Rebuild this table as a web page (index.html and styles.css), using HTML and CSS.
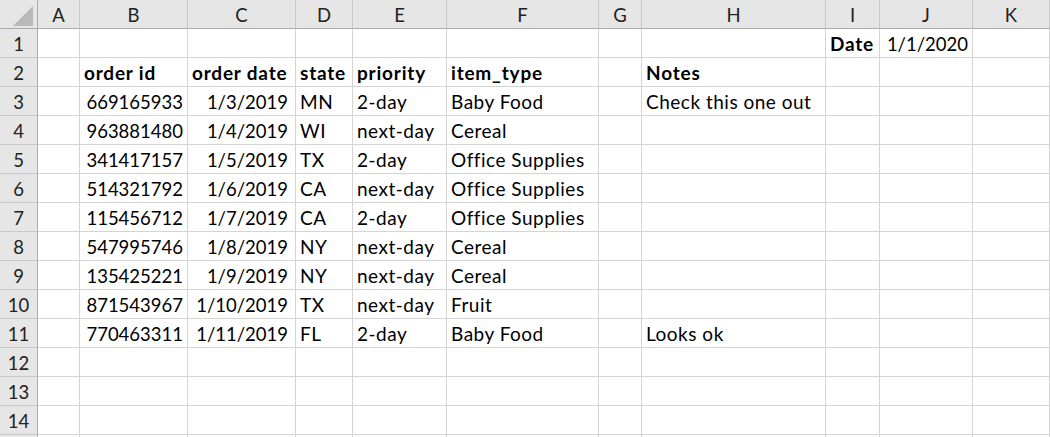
FILE: index.html
```html
<!DOCTYPE html>
<html>
<head>
<meta charset="utf-8">
<link rel="stylesheet" href="styles.css">
</head>
<body>
<div class="sheet">
  <div class="corner"><span class="tri"></span></div>
  <div class="ch">A</div><div class="ch">B</div><div class="ch">C</div><div class="ch">D</div><div class="ch">E</div><div class="ch">F</div><div class="ch">G</div><div class="ch">H</div><div class="ch">I</div><div class="ch">J</div><div class="ch">K</div>

  <div class="rh">1</div><div class="c"></div><div class="c"></div><div class="c"></div><div class="c"></div><div class="c"></div><div class="c"></div><div class="c"></div><div class="c"></div><div class="c b">Date</div><div class="c n rj">1/1/2020</div><div class="c"></div>

  <div class="rh">2</div><div class="c"></div><div class="c b">order id</div><div class="c b">order date</div><div class="c b">state</div><div class="c b">priority</div><div class="c b">item_type</div><div class="c"></div><div class="c b">Notes</div><div class="c"></div><div class="c"></div><div class="c"></div>

  <div class="rh">3</div><div class="c"></div><div class="c n rb">669165933</div><div class="c n rc">1/3/2019</div><div class="c">MN</div><div class="c">2-day</div><div class="c">Baby Food</div><div class="c"></div><div class="c ov">Check this one out</div><div class="c"></div><div class="c"></div><div class="c"></div>

  <div class="rh">4</div><div class="c"></div><div class="c n rb">963881480</div><div class="c n rc">1/4/2019</div><div class="c">WI</div><div class="c">next-day</div><div class="c">Cereal</div><div class="c"></div><div class="c"></div><div class="c"></div><div class="c"></div><div class="c"></div>

  <div class="rh">5</div><div class="c"></div><div class="c n rb">341417157</div><div class="c n rc">1/5/2019</div><div class="c">TX</div><div class="c">2-day</div><div class="c">Office Supplies</div><div class="c"></div><div class="c"></div><div class="c"></div><div class="c"></div><div class="c"></div>

  <div class="rh">6</div><div class="c"></div><div class="c n rb">514321792</div><div class="c n rc">1/6/2019</div><div class="c">CA</div><div class="c">next-day</div><div class="c">Office Supplies</div><div class="c"></div><div class="c"></div><div class="c"></div><div class="c"></div><div class="c"></div>

  <div class="rh">7</div><div class="c"></div><div class="c n rb">115456712</div><div class="c n rc">1/7/2019</div><div class="c">CA</div><div class="c">2-day</div><div class="c">Office Supplies</div><div class="c"></div><div class="c"></div><div class="c"></div><div class="c"></div><div class="c"></div>

  <div class="rh">8</div><div class="c"></div><div class="c n rb">547995746</div><div class="c n rc">1/8/2019</div><div class="c">NY</div><div class="c">next-day</div><div class="c">Cereal</div><div class="c"></div><div class="c"></div><div class="c"></div><div class="c"></div><div class="c"></div>

  <div class="rh">9</div><div class="c"></div><div class="c n rb">135425221</div><div class="c n rc">1/9/2019</div><div class="c">NY</div><div class="c">next-day</div><div class="c">Cereal</div><div class="c"></div><div class="c"></div><div class="c"></div><div class="c"></div><div class="c"></div>

  <div class="rh">10</div><div class="c"></div><div class="c n rb">871543967</div><div class="c n rc">1/10/2019</div><div class="c">TX</div><div class="c">next-day</div><div class="c">Fruit</div><div class="c"></div><div class="c"></div><div class="c"></div><div class="c"></div><div class="c"></div>

  <div class="rh">11</div><div class="c"></div><div class="c n rb">770463311</div><div class="c n rc">1/11/2019</div><div class="c">FL</div><div class="c">2-day</div><div class="c">Baby Food</div><div class="c"></div><div class="c">Looks ok</div><div class="c"></div><div class="c"></div><div class="c"></div>

  <div class="rh">12</div><div class="c"></div><div class="c"></div><div class="c"></div><div class="c"></div><div class="c"></div><div class="c"></div><div class="c"></div><div class="c"></div><div class="c"></div><div class="c"></div><div class="c"></div>

  <div class="rh">13</div><div class="c"></div><div class="c"></div><div class="c"></div><div class="c"></div><div class="c"></div><div class="c"></div><div class="c"></div><div class="c"></div><div class="c"></div><div class="c"></div><div class="c"></div>

  <div class="rh">14</div><div class="c"></div><div class="c"></div><div class="c"></div><div class="c"></div><div class="c"></div><div class="c"></div><div class="c"></div><div class="c"></div><div class="c"></div><div class="c"></div><div class="c"></div>

  <div class="rh"></div><div class="c"></div><div class="c"></div><div class="c"></div><div class="c"></div><div class="c"></div><div class="c"></div><div class="c"></div><div class="c"></div><div class="c"></div><div class="c"></div><div class="c"></div>
</div>
</body>
</html>
```
FILE: styles.css
```css
html, body {
  margin: 0;
  padding: 0;
  background: #ffffff;
  overflow: hidden;
  width: 1050px;
  height: 437px;
}

.sheet {
  display: grid;
  grid-template-columns: 38px 42px 108px 108px 57px 94px 152px 43px 184px 54px 93px 77px;
  grid-template-rows: 29px repeat(14, 29px) 3px;
  font-family: "Lato", "Open Sans", sans-serif;
  font-size: 19px;
  color: #000000;
}

.corner {
  background: #e6e6e6;
  border-right: 1px solid #ababab;
  border-bottom: 1px solid #ababab;
  box-sizing: border-box;
  position: relative;
}

.tri {
  position: absolute;
  left: 13px;
  top: 6px;
  width: 0;
  height: 0;
  border-left: 20px solid transparent;
  border-bottom: 20px solid #b9b9b9;
}

.ch {
  background: #e6e6e6;
  border-right: 1px solid #c8c8c8;
  border-bottom: 1px solid #ababab;
  box-sizing: border-box;
  display: flex;
  align-items: center;
  justify-content: center;
  color: #222222;
  font-size: 18.5px;
  padding-top: 1px;
}

.rh {
  background: #e6e6e6;
  border-right: 1px solid #ababab;
  border-bottom: 1px solid #c8c8c8;
  box-sizing: border-box;
  display: flex;
  align-items: flex-end;
  justify-content: center;
  color: #222222;
  font-size: 18.5px;
  line-height: 22px;
  padding-bottom: 2px;
}

.c {
  border-right: 1px solid #d4d4d4;
  border-bottom: 1px solid #d4d4d4;
  box-sizing: border-box;
  display: flex;
  align-items: flex-end;
  padding: 0 4px 2px 4px;
  line-height: 22px;
  letter-spacing: 0.5px;
  white-space: nowrap;
  overflow: hidden;
}

.n {
  font-size: 18.5px;
  letter-spacing: 0;
}

.ov {
  overflow: visible;
}

.b {
  font-weight: bold;
  letter-spacing: 0.8px;
}

.rb {
  justify-content: flex-end;
  padding-right: 4px;
}

.rc {
  justify-content: flex-end;
  padding-right: 7px;
}

.rj {
  justify-content: flex-end;
  padding-right: 4px;
}
```
